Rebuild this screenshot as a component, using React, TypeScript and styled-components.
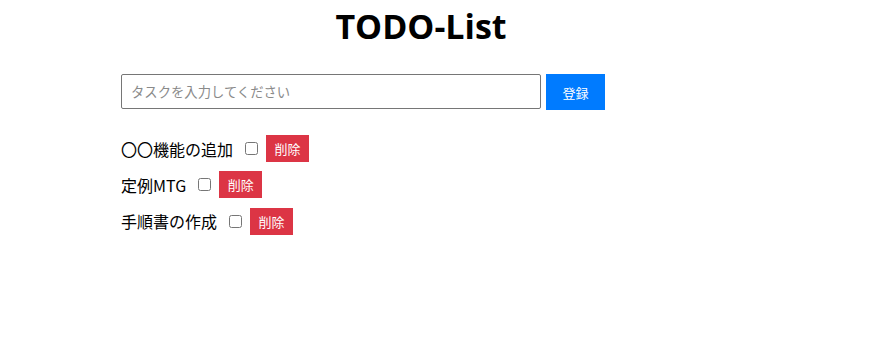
import React, { useState } from "react";
import styled, { createGlobalStyle } from "styled-components";

const GlobalStyle = createGlobalStyle`
  html, body { margin: 0; padding: 0; background: #ffffff; }
  body {
    font-family: "Noto Sans CJK JP", "Noto Sans", sans-serif;
    color: #000000;
  }
`;

const Page = styled.div`
  width: 600px;
  padding: 10px 0 0 121px;
  display: flex;
  flex-direction: column;
`;

const Title = styled.h1`
  margin: 0;
  font-family: "Open Sans", "Noto Sans CJK JP", sans-serif;
  font-size: 34px;
  line-height: 32px;
  font-weight: 700;
  text-align: center;
`;

const Form = styled.div`
  margin-top: 32px;
  display: flex;
  align-items: flex-start;
  gap: 5px;
`;

const TaskInput = styled.input`
  box-sizing: border-box;
  width: 420px;
  height: 35px;
  padding: 0 9px;
  border: 1px solid #767676;
  border-radius: 2px;
  font-family: "Noto Sans CJK JP", sans-serif;
  font-size: 13.33px;
  outline: none;
  &::placeholder { color: #8a8a8a; }
`;

const Button = styled.button<{ $variant: "primary" | "danger" }>`
  box-sizing: border-box;
  border: none;
  border-radius: 0;
  color: #ffffff;
  font-family: "Noto Sans CJK JP", sans-serif;
  font-size: 13px;
  line-height: 1;
  cursor: pointer;
  background: ${(p) => (p.$variant === "primary" ? "#007bff" : "#dc3545")};
  height: ${(p) => (p.$variant === "primary" ? "36px" : "27px")};
  padding: ${(p) => (p.$variant === "primary" ? "0 16px" : "0 8px")};
  width: ${(p) => (p.$variant === "primary" ? "59px" : "43px")};
`;

const List = styled.ul`
  list-style: none;
  margin: 25px 0 0;
  padding: 0;
  display: flex;
  flex-direction: column;
  gap: 9.4px;
`;

const Row = styled.li`
  display: flex;
  align-items: center;
  height: 27px;
`;

const Label = styled.span`
  font-size: 16px;
  line-height: 1;
`;

const Check = styled.input`
  width: 13px;
  height: 13px;
  margin: 0 8px 0 12px;
`;

export default function App() {
  const [tasks] = useState(["〇〇機能の追加", "定例MTG", "手順書の作成"]);
  return (
    <>
      <GlobalStyle />
      <Page>
        <Title>TODO-List</Title>
        <Form>
          <TaskInput placeholder="タスクを入力してください" />
          <Button $variant="primary">登録</Button>
        </Form>
        <List>
          {tasks.map((t) => (
            <Row key={t}>
              <Label>{t}</Label>
              <Check type="checkbox" />
              <Button $variant="danger">削除</Button>
            </Row>
          ))}
        </List>
      </Page>
    </>
  );
}
